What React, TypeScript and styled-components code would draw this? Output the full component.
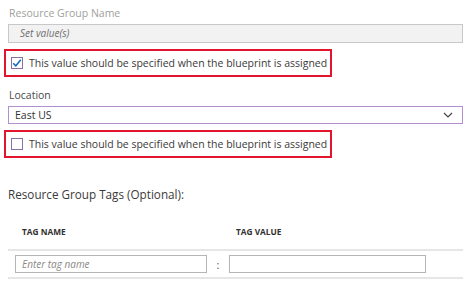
import styled, { createGlobalStyle } from 'styled-components'

const GlobalStyle = createGlobalStyle`
  html, body {
    margin: 0;
    padding: 0;
    background: #ffffff;
  }
  body {
    font-family: 'Open Sans', 'Noto Sans', sans-serif;
    color: #323130;
  }
`

const CheckIcon = () => (
  <svg width="10" height="10" viewBox="0 0 10 10">
    <path d="M1.2 5.2 L3.8 7.8 L8.8 1.8" fill="none" stroke="#0f6cbd" strokeWidth="1.5" />
  </svg>
)

const ChevronIcon = () => (
  <svg width="10" height="6" viewBox="0 0 10 6">
    <path d="M1 1 L5 5 L9 1" fill="none" stroke="#444" strokeWidth="1.2" />
  </svg>
)

const App = () => {
  return (
    <>
      <GlobalStyle />
      <Page>
        <Field>
          <Label disabled>Resource Group Name</Label>
          <DisabledInput>Set value(s)</DisabledInput>
        </Field>
        <Highlight>
          <Checkbox>
            <CheckIcon />
          </Checkbox>
          <CheckText>This value should be specified when the blueprint is assigned</CheckText>
        </Highlight>

        <Field top={10}>
          <Label>Location</Label>
          <Select>
            <span>East US</span>
            <ChevronIcon />
          </Select>
        </Field>
        <Highlight>
          <Checkbox />
          <CheckText>This value should be specified when the blueprint is assigned</CheckText>
        </Highlight>

        <SectionTitle>Resource Group Tags (Optional):</SectionTitle>

        <TagTable>
          <TagHead>
            <HeadCell>TAG NAME</HeadCell>
            <HeadCell>TAG VALUE</HeadCell>
          </TagHead>
          <TagRow>
            <TagInput>Enter tag name</TagInput>
            <Colon>:</Colon>
            <TagInput />
          </TagRow>
        </TagTable>
      </Page>
    </>
  )
}

const Page = styled.div`
  width: 474px;
  height: 287px;
  box-sizing: border-box;
  padding: 5px 11px 0 8px;
  display: flex;
  flex-direction: column;
  overflow: hidden;
`

const Field = styled.div<{ top?: number }>`
  display: flex;
  flex-direction: column;
  gap: 2px;
  margin-top: ${({ top }) => top ?? 0}px;
`

const Label = styled.div<{ disabled?: boolean }>`
  font-size: 10.5px;
  line-height: 17px;
  color: ${({ disabled }) => (disabled ? '#a19f9d' : '#4a4a4a')};
  padding-left: 1px;
`

const DisabledInput = styled.div`
  height: 19px;
  box-sizing: border-box;
  border: 1px solid #c8c8c8;
  background: #f2f2f2;
  font-size: 10px;
  font-style: italic;
  color: #6e6e6e;
  padding: 0 11px;
  line-height: 17px;
`

const Select = styled.div`
  height: 18px;
  box-sizing: border-box;
  border: 1px solid #b48fd0;
  background: #ffffff;
  font-size: 10.5px;
  color: #323130;
  padding: 0 9px 0 6px;
  display: flex;
  align-items: center;
  justify-content: space-between;
`

const Highlight = styled.div`
  margin: 6px 0 0 -4px;
  width: 328px;
  height: 28px;
  box-sizing: border-box;
  border: 2px solid #e3142d;
  display: flex;
  align-items: center;
  gap: 6px;
  padding-left: 5px;
`

const Checkbox = styled.div`
  flex-shrink: 0;
  width: 12px;
  height: 12px;
  box-sizing: border-box;
  border: 1px solid #8a6fa6;
  background: #ffffff;
  display: flex;
  align-items: center;
  justify-content: center;
`

const CheckText = styled.span`
  font-size: 10.5px;
  color: #3b3a39;
  white-space: nowrap;
`

const SectionTitle = styled.div`
  margin-top: 28px;
  font-size: 11.7px;
  color: #3b3a39;
`

const TagTable = styled.div`
  margin-top: 24px;
  display: flex;
  flex-direction: column;
`

const TagHead = styled.div`
  display: grid;
  grid-template-columns: 214px 1fr;
  padding: 0 0 12px 14px;
  border-bottom: 2px solid #e6e6e6;
`

const HeadCell = styled.span`
  font-size: 8.3px;
  font-weight: 700;
  color: #323130;
`

const TagRow = styled.div`
  display: grid;
  grid-template-columns: 192px 22px 197px;
  align-items: center;
  padding: 4px 0 4px 7px;
  border-bottom: 2px solid #e6e6e6;
`

const TagInput = styled.div`
  height: 18px;
  box-sizing: border-box;
  border: 1px solid #b5b5b5;
  background: #ffffff;
  font-size: 10px;
  font-style: italic;
  color: #8a8886;
  padding: 0 6px;
  line-height: 16px;
`

const Colon = styled.span`
  font-size: 11px;
  color: #555;
  text-align: center;
`

export default App
